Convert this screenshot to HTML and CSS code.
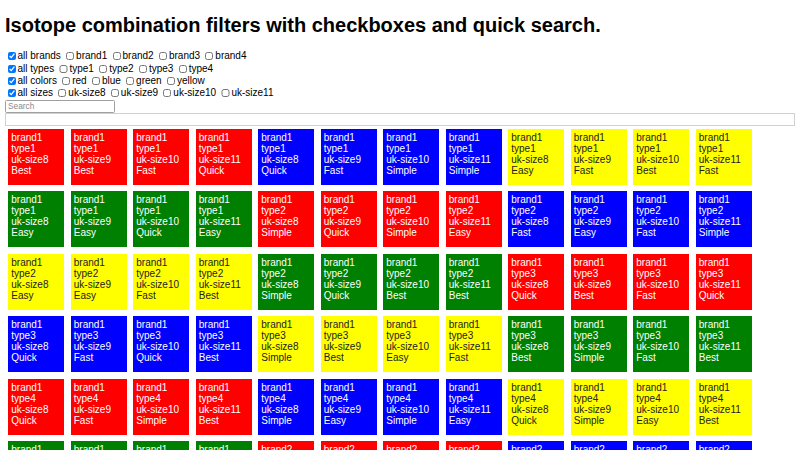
FILE: index.html
```html
<html>

<head>
  <title>Isotope combination filters</title>
  <link rel="stylesheet" href="styles.css">
</head>

<body>
  <h1>Isotope combination filters with checkboxes and quick search.</h1>

  <div class="filters">
    <div class="filter-row">
      <label><input type="checkbox" checked />all brands</label>
      <label><input type="checkbox" />brand1</label>
      <label><input type="checkbox" />brand2</label>
      <label><input type="checkbox" />brand3</label>
      <label><input type="checkbox" />brand4</label>
    </div>
    <div class="filter-row">
      <label><input type="checkbox" checked />all types</label>
      <label><input type="checkbox" />type1</label>
      <label><input type="checkbox" />type2</label>
      <label><input type="checkbox" />type3</label>
      <label><input type="checkbox" />type4</label>
    </div>
    <div class="filter-row">
      <label><input type="checkbox" checked />all colors</label>
      <label><input type="checkbox" />red</label>
      <label><input type="checkbox" />blue</label>
      <label><input type="checkbox" />green</label>
      <label><input type="checkbox" />yellow</label>
    </div>
    <div class="filter-row">
      <label><input type="checkbox" checked />all sizes</label>
      <label><input type="checkbox" />uk-size8</label>
      <label><input type="checkbox" />uk-size9</label>
      <label><input type="checkbox" />uk-size10</label>
      <label><input type="checkbox" />uk-size11</label>
    </div>
  </div>

  <input type="text" class="quicksearch" placeholder="Search" />
  <div class="filter-display"></div>

  <div class="grid" id="grid"></div>

  <script>
    var colors = ['red', 'blue', 'yellow', 'green'];
    var sizes = ['uk-size8', 'uk-size9', 'uk-size10', 'uk-size11'];
    var speeds = (
      'Best Best Fast Quick Quick Fast Simple Simple Easy Fast Best Fast ' +
      'Easy Easy Quick Easy Simple Quick Simple Easy Fast Easy Fast Simple ' +
      'Easy Easy Fast Best Simple Quick Best Best Quick Best Fast Quick ' +
      'Quick Fast Quick Best Simple Best Easy Fast Best Simple Fast Best ' +
      'Quick Fast Simple Best Simple Easy Simple Easy Quick Simple Easy Best ' +
      'Fast Easy Best Quick Simple Best Fast Easy Quick Quick Best Simple'
    ).split(' ');

    var grid = document.getElementById('grid');
    var n = 0;

    for (var b = 1; b <= 2; b++) {
      for (var t = 1; t <= 4; t++) {
        colors.forEach(function (color) {
          sizes.forEach(function (size) {
            if (n >= speeds.length) return;
            var item = document.createElement('div');
            item.className = 'item ' + color;
            item.innerHTML = 'brand' + b + '<br>type' + t + '<br>' + size + '<br>' + speeds[n];
            grid.appendChild(item);
            n++;
          });
        });
      }
    }
  </script>
</body>

</html>
```

FILE: styles.css
```css
body {
  font-family: 'Liberation Sans', Arial, sans-serif;
  font-size: 10px;
  margin: 5px;
  color: #000;
  background: #fff;
}

h1 {
  font-size: 20px;
  font-weight: bold;
  margin: 9px 0 13.4px;
}

.filter-row {
  height: 12.3px;
  line-height: 12.3px;
}

.filter-row input {
  width: 8.1px;
  height: 8.1px;
  margin: 0 1.9px 0 2.5px;
  vertical-align: -1px;
}

.quicksearch {
  display: block;
  box-sizing: border-box;
  width: 110px;
  height: 13px;
  margin: 0;
  padding: 0 2px;
  font-family: 'Liberation Sans', Arial, sans-serif;
  font-size: 8.3px;
  border: 1px solid #a0a0a0;
  border-radius: 1.5px;
}

.quicksearch::placeholder {
  color: #8a8a8a;
}

.filter-display {
  height: 11px;
  border: 1px solid #d0d0d0;
}

.grid {
  display: flex;
  flex-wrap: wrap;
}

.item {
  width: 50px;
  height: 50px;
  padding: 3.125px;
  margin: 3.125px;
  color: #fff;
}

.item.red {
  background: #f00;
}

.item.blue {
  background: #00f;
}

.item.green {
  background: #008000;
}

.item.yellow {
  background: #ff0;
  color: #222;
}
```
